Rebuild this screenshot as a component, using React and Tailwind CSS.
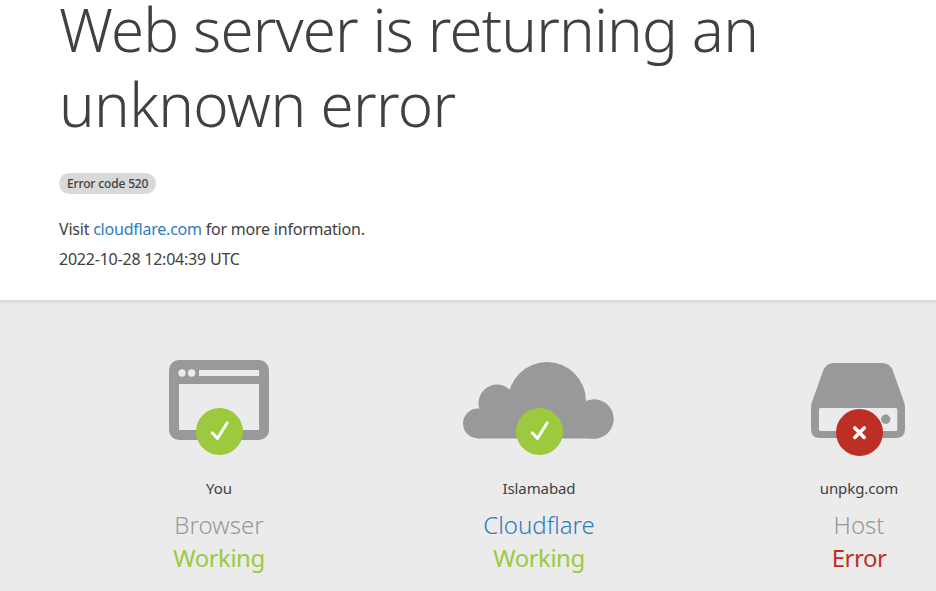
const sans = { fontFamily: '"Noto Sans", "Open Sans", sans-serif' };

function Badge({ ok, className }) {
  return (
    <svg viewBox="0 0 47 47" className={`absolute w-[47px] h-[47px] ${className}`}>
      <circle cx="23.5" cy="23.5" r="23.5" fill={ok ? "#9bca3e" : "#bd2f24"} />
      {ok ? (
        <path d="M16.2 24.8 L21.5 30.5 L31.2 14.8" fill="none" stroke="#fff" strokeWidth="3" strokeLinecap="round" strokeLinejoin="round" />
      ) : (
        <path d="M18.8 19 L28.2 28.4 M28.2 19 L18.8 28.4" fill="none" stroke="#fff" strokeWidth="3.6" strokeLinecap="round" />
      )}
    </svg>
  );
}

function BrowserIcon() {
  return (
    <svg width="100" height="80" viewBox="0 0 100 80" className="ml-[110px]">
      <rect width="100" height="80" rx="10" fill="#999" />
      <rect x="10" y="24" width="80" height="46" fill="#ebebeb" />
      <circle cx="13" cy="13" r="3.7" fill="#ebebeb" />
      <circle cx="22.6" cy="13" r="3.7" fill="#ebebeb" />
      <rect x="30" y="10" width="60" height="6" fill="#ebebeb" />
    </svg>
  );
}

function CloudIcon() {
  return (
    <svg width="151" height="77" viewBox="0 0 151 77" className="ml-[84px]">
      <g fill="#999">
        <circle cx="84" cy="39" r="39" />
        <circle cx="34" cy="41" r="18.5" />
        <circle cx="15" cy="61.5" r="15" />
        <circle cx="131" cy="57" r="19.7" />
        <rect x="15" y="50" width="116" height="26.5" />
      </g>
    </svg>
  );
}

function HostIcon() {
  return (
    <svg width="94" height="75" viewBox="0 0 94 75" className="ml-[112px]">
      <path d="M23 0 H71 Q79 0 82 8 L93 39 Q94 42 94 45 V66 Q94 75 85 75 H9 Q0 75 0 66 V45 Q0 42 1 39 L12 8 Q15 0 23 0 Z" fill="#999" />
      <rect x="8" y="45" width="78.300" height="23" rx="1.500" fill="#ebebeb" />
      <circle cx="74.700" cy="56.300" r="4.700" fill="#999" />
    </svg>
  );
}

function Column({ location, name, nameColor, status, statusColor, ok, badgeClass, iconClass, icon }) {
  return (
    <div className="w-[320px] shrink-0 text-center">
      <div className={`relative h-[117px] text-left ${iconClass}`}>
        {icon}
        <Badge ok={ok} className={badgeClass} />
      </div>
      <p className="text-[15px] leading-[22px] text-[#404040] tracking-[-0.1px]">{location}</p>
      <p className="mt-[10px] text-[24px] leading-[32px] font-light" style={{ color: nameColor }}>{name}</p>
      <p className="mt-[0.5px] text-[24px] leading-[32px] tracking-[-0.5px]" style={{ color: statusColor }}>{status}</p>
    </div>
  );
}

export default function App() {
  return (
    <div className="w-[936px] h-[591px] overflow-hidden bg-white text-[#404040]" style={sans}>
      <div className="h-[300px] pl-[59px] overflow-hidden">
        <h1 className="text-[60px] font-light w-[800px]">
          <span className="block leading-[59px] tracking-[-0.84px]">Web server is returning an</span>
          <span className="block mt-[8px] leading-[75px] tracking-[-0.65px]">unknown error</span>
        </h1>
        <div className="mt-[31px] inline-block h-[21px] rounded-full bg-[#d9d9d9] px-[8px] text-[12px] leading-[21px] font-medium tracking-[-0.15px] text-[#404040]">
          Error code 520
        </div>
        <p className="mt-[20px] text-[16px] leading-[30px] tracking-[-0.22px]">
          Visit <a className="text-[#2f7bbf]">cloudflare.com</a> for more information.
        </p>
        <p className="text-[16px] leading-[30px] tracking-[-0.22px]">2022-10-28 12:04:39 UTC</p>
      </div>
      <div className="h-[291px] bg-[#ebebeb] shadow-[inset_0_6px_6px_-6px_rgba(0,0,0,0.18)] pl-[59px] pt-[60px] flex">
        <Column icon={<BrowserIcon />} location="You" name="Browser" nameColor="#999" status="Working" statusColor="#9bca3e" ok badgeClass="left-[137px] top-[48px]" />
        <Column icon={<CloudIcon />} iconClass="pt-[2px]" location="Islamabad" name="Cloudflare" nameColor="#2f7bbf" status="Working" statusColor="#9bca3e" ok badgeClass="left-[137px] top-[48px]" />
        <Column icon={<HostIcon />} iconClass="pt-[3px]" location="unpkg.com" name="Host" nameColor="#999" status="Error" statusColor="#bd2f24" badgeClass="left-[137px] top-[49px]" />
      </div>
    </div>
  );
}
